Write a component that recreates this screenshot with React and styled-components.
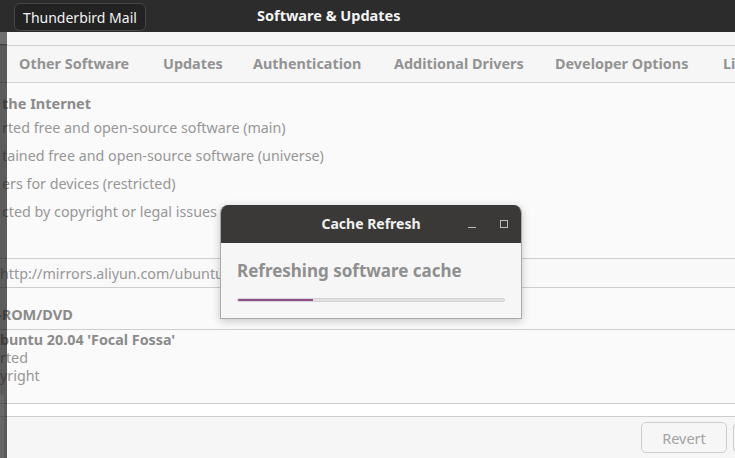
import React from 'react';
import styled, { createGlobalStyle } from 'styled-components';

const GlobalStyle = createGlobalStyle`
  html, body {
    margin: 0;
    padding: 0;
    background: #f6f6f6;
    overflow: hidden;
  }
  * {
    box-sizing: border-box;
  }
`;

const font = `"Noto Sans", "Open Sans", sans-serif`;

const Screen = styled.div`
  position: relative;
  width: 735px;
  height: 458px;
  overflow: hidden;
  display: flex;
  flex-direction: column;
  font-family: ${font};
  background: #f6f6f6;
`;

const TopBar = styled.div`
  height: 32px;
  flex: none;
  background: #2c2c2c;
  display: flex;
  align-items: flex-start;
  padding-left: 14px;
`;

const AppButton = styled.div`
  margin-top: 3px;
  width: 132px;
  height: 28px;
  border: 1px solid #474747;
  border-radius: 6px;
  background: #222;
  color: #f2f2f2;
  font-size: 14px;
  display: flex;
  align-items: center;
  justify-content: center;
`;

const WinTitle = styled.div`
  margin-left: 111px;
  height: 30px;
  display: flex;
  align-items: center;
  color: #f4f4f4;
  font-size: 14.5px;
  font-weight: 700;
`;

const StackTop = styled.div`
  height: 14px;
  flex: none;
  border-bottom: 1px solid #cfcfcf;
  background: #f6f6f6;
`;

const Tabs = styled.div`
  height: 37px;
  flex: none;
  display: flex;
  align-items: center;
  padding-left: 19px;
  padding-bottom: 2px;
  border-bottom: 1px solid #cfcfcf;
  background: #f6f6f6;
  white-space: nowrap;
`;

const Tab = styled.div`
  flex: none;
  width: ${p => (p.$w ? `${p.$w}px` : 'auto')};
  color: #939393;
  font-size: 14.4px;
  font-weight: 700;
`;

const Content = styled.div`
  flex: 1;
  display: flex;
  flex-direction: column;
  background: #fafafa;
  padding-top: 10px;
`;

const SectionTitle = styled.div`
  height: 20px;
  line-height: 20px;
  padding-left: 2px;
  color: #8b8b8b;
  font-size: 14.5px;
  font-weight: 700;
  white-space: nowrap;
`;

const Options = styled.div`
  display: flex;
  flex-direction: column;
  padding-top: 1px;
`;

const Option = styled.div`
  height: 28px;
  line-height: 28px;
  padding-left: 2px;
  color: #979797;
  font-size: 14.3px;
  white-space: nowrap;
`;

const Combo = styled.div`
  margin-top: 32px;
  height: 30px;
  flex: none;
  border-top: 1px solid #cdcdcd;
  border-bottom: 1px solid #cdcdcd;
  background: #f9f9f9;
  display: flex;
  align-items: center;
  color: #979797;
  font-size: 14.3px;
  white-space: nowrap;
`;

const DvdHeader = styled(SectionTitle)`
  margin-top: 16px;
  padding-left: 0;
  text-indent: -3px;
`;

const ListBox = styled.div`
  margin-top: 5px;
  height: 75px;
  flex: none;
  border-top: 1px solid #cdcdcd;
  border-bottom: 1px solid #cdcdcd;
  background: #fafafa;
  padding-top: 1px;
  display: flex;
  flex-direction: column;
`;

const ListLine = styled.div`
  height: 18px;
  line-height: 18px;
  font-size: 14.3px;
  color: ${p => (p.$bold ? '#8b8b8b' : '#979797')};
  font-weight: ${p => (p.$bold ? 700 : 400)};
  white-space: nowrap;
`;

const WhiteStrip = styled.div`
  height: 13px;
  flex: none;
  background: #fff;
  border-bottom: 1px solid #cdcdcd;
`;

const Footer = styled.div`
  flex: none;
  height: 41px;
  background: #f6f6f6;
  display: flex;
  align-items: flex-start;
  padding-top: 5px;
  padding-left: 641px;
  gap: 6px;
`;

const Button = styled.div`
  flex: none;
  width: 86px;
  height: 31px;
  border: 1px solid #cdcdcd;
  border-radius: 5px;
  background: #f6f6f6;
  color: #a3a3a3;
  font-size: 14.5px;
  display: flex;
  align-items: center;
  justify-content: center;
`;

const Dock = styled.div`
  position: absolute;
  left: 0;
  top: 32px;
  bottom: 0;
  width: 7px;
  background: rgba(30, 30, 30, 0.72);
  display: flex;
  flex-direction: column;
`;

const DockTop = styled.div`
  height: 13px;
  background: rgba(255, 255, 255, 0.12);
  border-bottom: 1px solid rgba(0, 0, 0, 0.4);
`;

const DockItem = styled.div`
  margin-top: auto;
  margin-bottom: -6px;
  width: 4px;
  height: 70px;
  border-radius: 0 4px 4px 0;
  background: rgba(255, 255, 255, 0.08);
`;

const Dialog = styled.div`
  position: absolute;
  left: 220px;
  top: 205px;
  width: 302px;
  height: 114px;
  border: 1px solid #a9a9a9;
  border-top: none;
  border-radius: 8px 8px 0 0;
  background: #f6f6f6;
  box-shadow: 0 2px 8px rgba(0, 0, 0, 0.22);
  display: flex;
  flex-direction: column;
  overflow: hidden;
`;

const DialogHead = styled.div`
  position: relative;
  height: 38px;
  flex: none;
  background: #3a3937;
  display: flex;
  align-items: center;
  justify-content: center;
  padding-bottom: 2px;
  color: #f0f0f0;
  font-size: 14px;
  font-weight: 700;
`;

const HeadControls = styled.div`
  position: absolute;
  right: 13px;
  top: 0;
  bottom: 0;
  display: flex;
  align-items: center;
  gap: 24px;
`;

const MinIcon = styled.div`
  width: 8px;
  height: 1px;
  margin-top: 7px;
  background: #bdbdbd;
`;

const MaxIcon = styled.div`
  width: 8px;
  height: 8px;
  margin-top: -1px;
  border: 1px solid #bdbdbd;
`;

const DialogBody = styled.div`
  flex: 1;
  padding: 18px 16px 0 16px;
  display: flex;
  flex-direction: column;
`;

const DialogText = styled.div`
  color: #8f8f8f;
  font-size: 17px;
  font-weight: 700;
  line-height: 20px;
`;

const Progress = styled.div`
  margin-top: 17px;
  height: 4px;
  border-radius: 2px;
  background: #e2e2e2;
  border: 1px solid #d3d3d3;
  overflow: hidden;
  display: flex;
`;

const ProgressFill = styled.div`
  background: #924d8b;
  height: 100%;
`;

const tabs = [
  ['Other Software', 144],
  ['Updates', 90],
  ['Authentication', 141],
  ['Additional Drivers', 161],
  ['Developer Options', 168],
  ['Li'],
];

export default function App() {
  const progress = 0.283;
  return (
    <>
      <GlobalStyle />
      <Screen>
        <TopBar>
          <AppButton>Thunderbird Mail</AppButton>
          <WinTitle>Software &amp; Updates</WinTitle>
        </TopBar>
        <StackTop />
        <Tabs>
          {tabs.map(([label, w]) => (
            <Tab key={label} $w={w}>{label}</Tab>
          ))}
        </Tabs>
        <Content>
          <SectionTitle>the Internet</SectionTitle>
          <Options>
            <Option>rted free and open-source software (main)</Option>
            <Option>tained free and open-source software (universe)</Option>
            <Option>ers for devices (restricted)</Option>
            <Option>cted by copyright or legal issues (m</Option>
          </Options>
          <Combo>http://mirrors.aliyun.com/ubuntu</Combo>
          <DvdHeader>-ROM/DVD</DvdHeader>
          <ListBox>
            <ListLine $bold>buntu 20.04 'Focal Fossa'</ListLine>
            <ListLine>rted</ListLine>
            <ListLine>yright</ListLine>
          </ListBox>
          <WhiteStrip />
        </Content>
        <Footer>
          <Button>Revert</Button>
          <Button />
        </Footer>

        <Dock>
          <DockTop />
          <DockItem />
        </Dock>

        <Dialog>
          <DialogHead>
            Cache Refresh
            <HeadControls>
              <MinIcon />
              <MaxIcon />
            </HeadControls>
          </DialogHead>
          <DialogBody>
            <DialogText>Refreshing software cache</DialogText>
            <Progress>
              <ProgressFill style={{ width: `${progress * 100}%` }} />
            </Progress>
          </DialogBody>
        </Dialog>
      </Screen>
    </>
  );
}
